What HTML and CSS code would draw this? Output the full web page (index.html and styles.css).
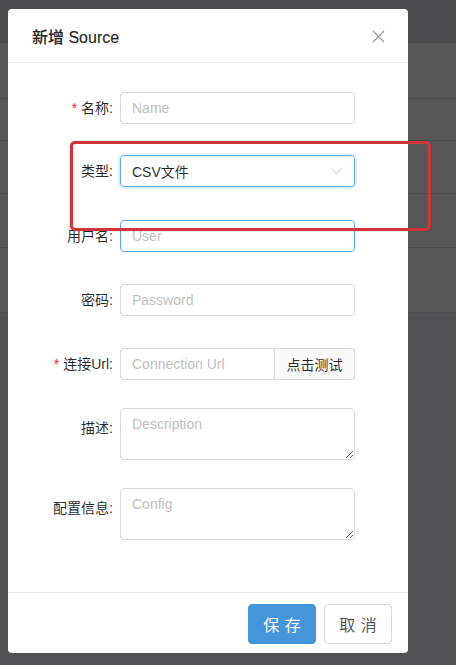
FILE: index.html
```html
<!DOCTYPE html>
<html lang="zh-CN">
<head>
<meta charset="utf-8">
<title>新增 Source</title>
<link rel="stylesheet" href="styles.css">
</head>
<body>
<div class="page">
  <div class="bg">
    <div class="bg-top"></div>
    <div class="bg-row h56"></div>
    <div class="bg-row h42"></div>
    <div class="bg-row h53"></div>
    <div class="bg-row h54"></div>
    <div class="bg-row h65"></div>
    <div class="bg-rest"></div>
  </div>

  <div class="modal">
    <div class="modal-header">
      <div class="modal-title">新增 Source</div>
      <svg class="close" width="13" height="13" viewBox="0 0 13 13"><path d="M1 1 L12 12 M12 1 L1 12" stroke="#999" stroke-width="1.2" fill="none"/></svg>
    </div>
    <div class="modal-body">
      <div class="form-item gap31">
        <label class="label"><span class="req">*</span>名称:</label>
        <input class="input" placeholder="Name">
      </div>
      <div class="form-item gap33">
        <label class="label">类型:</label>
        <div class="select">
          <span class="select-value">CSV文件</span>
          <svg class="chev" width="11" height="7" viewBox="0 0 11 7"><path d="M0.5 0.5 L5.5 6 L10.5 0.5" stroke="#bfbfbf" stroke-width="1" fill="none"/></svg>
        </div>
      </div>
      <div class="form-item">
        <label class="label">用户名:</label>
        <input class="input focus" placeholder="User">
      </div>
      <div class="form-item">
        <label class="label">密码:</label>
        <input class="input" placeholder="Password">
      </div>
      <div class="form-item gap28">
        <label class="label"><span class="req">*</span>连接Url:</label>
        <div class="group">
          <input class="input group-input" placeholder="Connection Url">
          <span class="addon">点击测试</span>
        </div>
      </div>
      <div class="form-item gap28">
        <label class="label ta">描述:</label>
        <textarea class="textarea" placeholder="Description"></textarea>
      </div>
      <div class="form-item last">
        <label class="label ta">配置信息:</label>
        <textarea class="textarea" placeholder="Config"></textarea>
      </div>
    </div>
    <div class="modal-footer">
      <button class="btn primary">保存</button>
      <button class="btn">取消</button>
    </div>
  </div>

  <div class="annot"></div>
</div>
</body>
</html>
```

FILE: styles.css
```css
* { box-sizing: border-box; }
html, body { margin: 0; padding: 0; }
body {
  width: 456px;
  height: 665px;
  overflow: hidden;
  font-family: "Liberation Sans", "Noto Sans CJK SC", sans-serif;
  font-size: 14px;
  color: rgba(0,0,0,0.85);
}
.page { position: relative; width: 456px; height: 665px; }

.bg { display: flex; flex-direction: column; height: 665px; }
.bg-top { height: 42px; background: #4b4c4e; }
.bg-row { background: #575757; border-top: 1px solid #4c4c4c; }
.h56 { height: 56px; }
.h42 { height: 42px; }
.h53 { height: 53px; }
.h54 { height: 54px; }
.h65 { height: 65px; }
.bg-rest { flex: 1; background: #515254; border-top: 1px solid #4c4c4c; }

.modal {
  position: absolute;
  left: 8px;
  top: 9px;
  width: 400px;
  height: 644px;
  background: #fff;
  border-radius: 4px;
  display: flex;
  flex-direction: column;
}
.modal-header {
  height: 54px;
  padding: 0 23px 0 24px;
  border-bottom: 1px solid #e8e8e8;
  display: flex;
  align-items: center;
  justify-content: space-between;
}
.modal-title {
  font-size: 16px;
  font-weight: 500;
  color: rgba(0,0,0,0.85);
  margin-top: 1px;
  -webkit-text-stroke: 0.2px rgba(0,0,0,0.85);
}
.close { display: block; margin-top: 2px; }

.modal-body {
  flex: 1;
  padding: 29px 0 0 0;
}
.form-item {
  display: flex;
  align-items: center;
  margin-bottom: 32px;
}
.form-item.gap31 { margin-bottom: 31px; }
.form-item.gap33 { margin-bottom: 33px; }
.form-item.gap28 { margin-bottom: 28px; }
.form-item.last { margin-bottom: 0; }
.form-item:has(.ta) { align-items: flex-start; }

.label {
  width: 112px;
  text-align: right;
  padding-right: 7px;
  font-size: 14px;
  line-height: 32px;
  color: rgba(0,0,0,0.85);
  white-space: nowrap;
}
.label.ta { line-height: 40px; }
.req {
  color: #f5222d;
  margin-right: 4px;
  font-family: "Liberation Sans", sans-serif;
}

.input {
  width: 235px;
  height: 32px;
  border: 1px solid #d9d9d9;
  border-radius: 4px;
  padding: 4px 11px;
  font-family: inherit;
  font-size: 14px;
  color: rgba(0,0,0,0.85);
  outline: none;
  background: #fff;
}
.input::placeholder, .textarea::placeholder { color: #bfbfbf; }
.input.focus { border-color: #5ea6de; }

.select {
  width: 235px;
  height: 32px;
  border: 1px solid #62ade5;
  border-radius: 4px;
  padding: 0 11px;
  display: flex;
  align-items: center;
  justify-content: space-between;
  box-shadow: 0 0 0 2px rgba(90,170,235,0.18);
}
.select-value { font-size: 14px; color: rgba(0,0,0,0.85); }
.chev { display: block; margin-right: 1px; }

.group { display: flex; width: 235px; height: 32px; }
.group-input {
  width: 155px;
  border-radius: 4px 0 0 4px;
}
.addon {
  width: 80px;
  height: 32px;
  border: 1px solid #d9d9d9;
  border-left: none;
  border-radius: 0 4px 4px 0;
  background: #fafafa;
  display: flex;
  align-items: center;
  justify-content: center;
  font-size: 14px;
  color: rgba(0,0,0,0.85);
}

.textarea {
  width: 235px;
  height: 52px;
  border: 1px solid #d9d9d9;
  border-radius: 4px;
  padding: 4px 11px;
  font-family: inherit;
  font-size: 14px;
  line-height: 22px;
  resize: vertical;
  outline: none;
  display: block;
}

.modal-footer {
  height: 61px;
  border-top: 1px solid #e8e8e8;
  padding: 0 16px 0 0;
  display: flex;
  align-items: center;
  justify-content: flex-end;
  gap: 8px;
}
.btn {
  width: 68px;
  height: 40px;
  border-radius: 4px;
  border: 1px solid #d9d9d9;
  background: #fff;
  font-family: "Noto Sans CJK SC", sans-serif;
  font-size: 16px;
  letter-spacing: 0.34em;
  text-indent: 0.34em;
  color: rgba(0,0,0,0.7);
  padding: 0;
  margin-top: 1px;
}
.btn.primary {
  background: #4694da;
  border-color: #4694da;
  color: #fff;
}

.annot {
  position: absolute;
  left: 70px;
  top: 141px;
  width: 361px;
  height: 90px;
  border: 3px solid #d1343b;
  border-radius: 5px;
  box-shadow: 0 0 2px rgba(0,0,0,0.25);
}
```
